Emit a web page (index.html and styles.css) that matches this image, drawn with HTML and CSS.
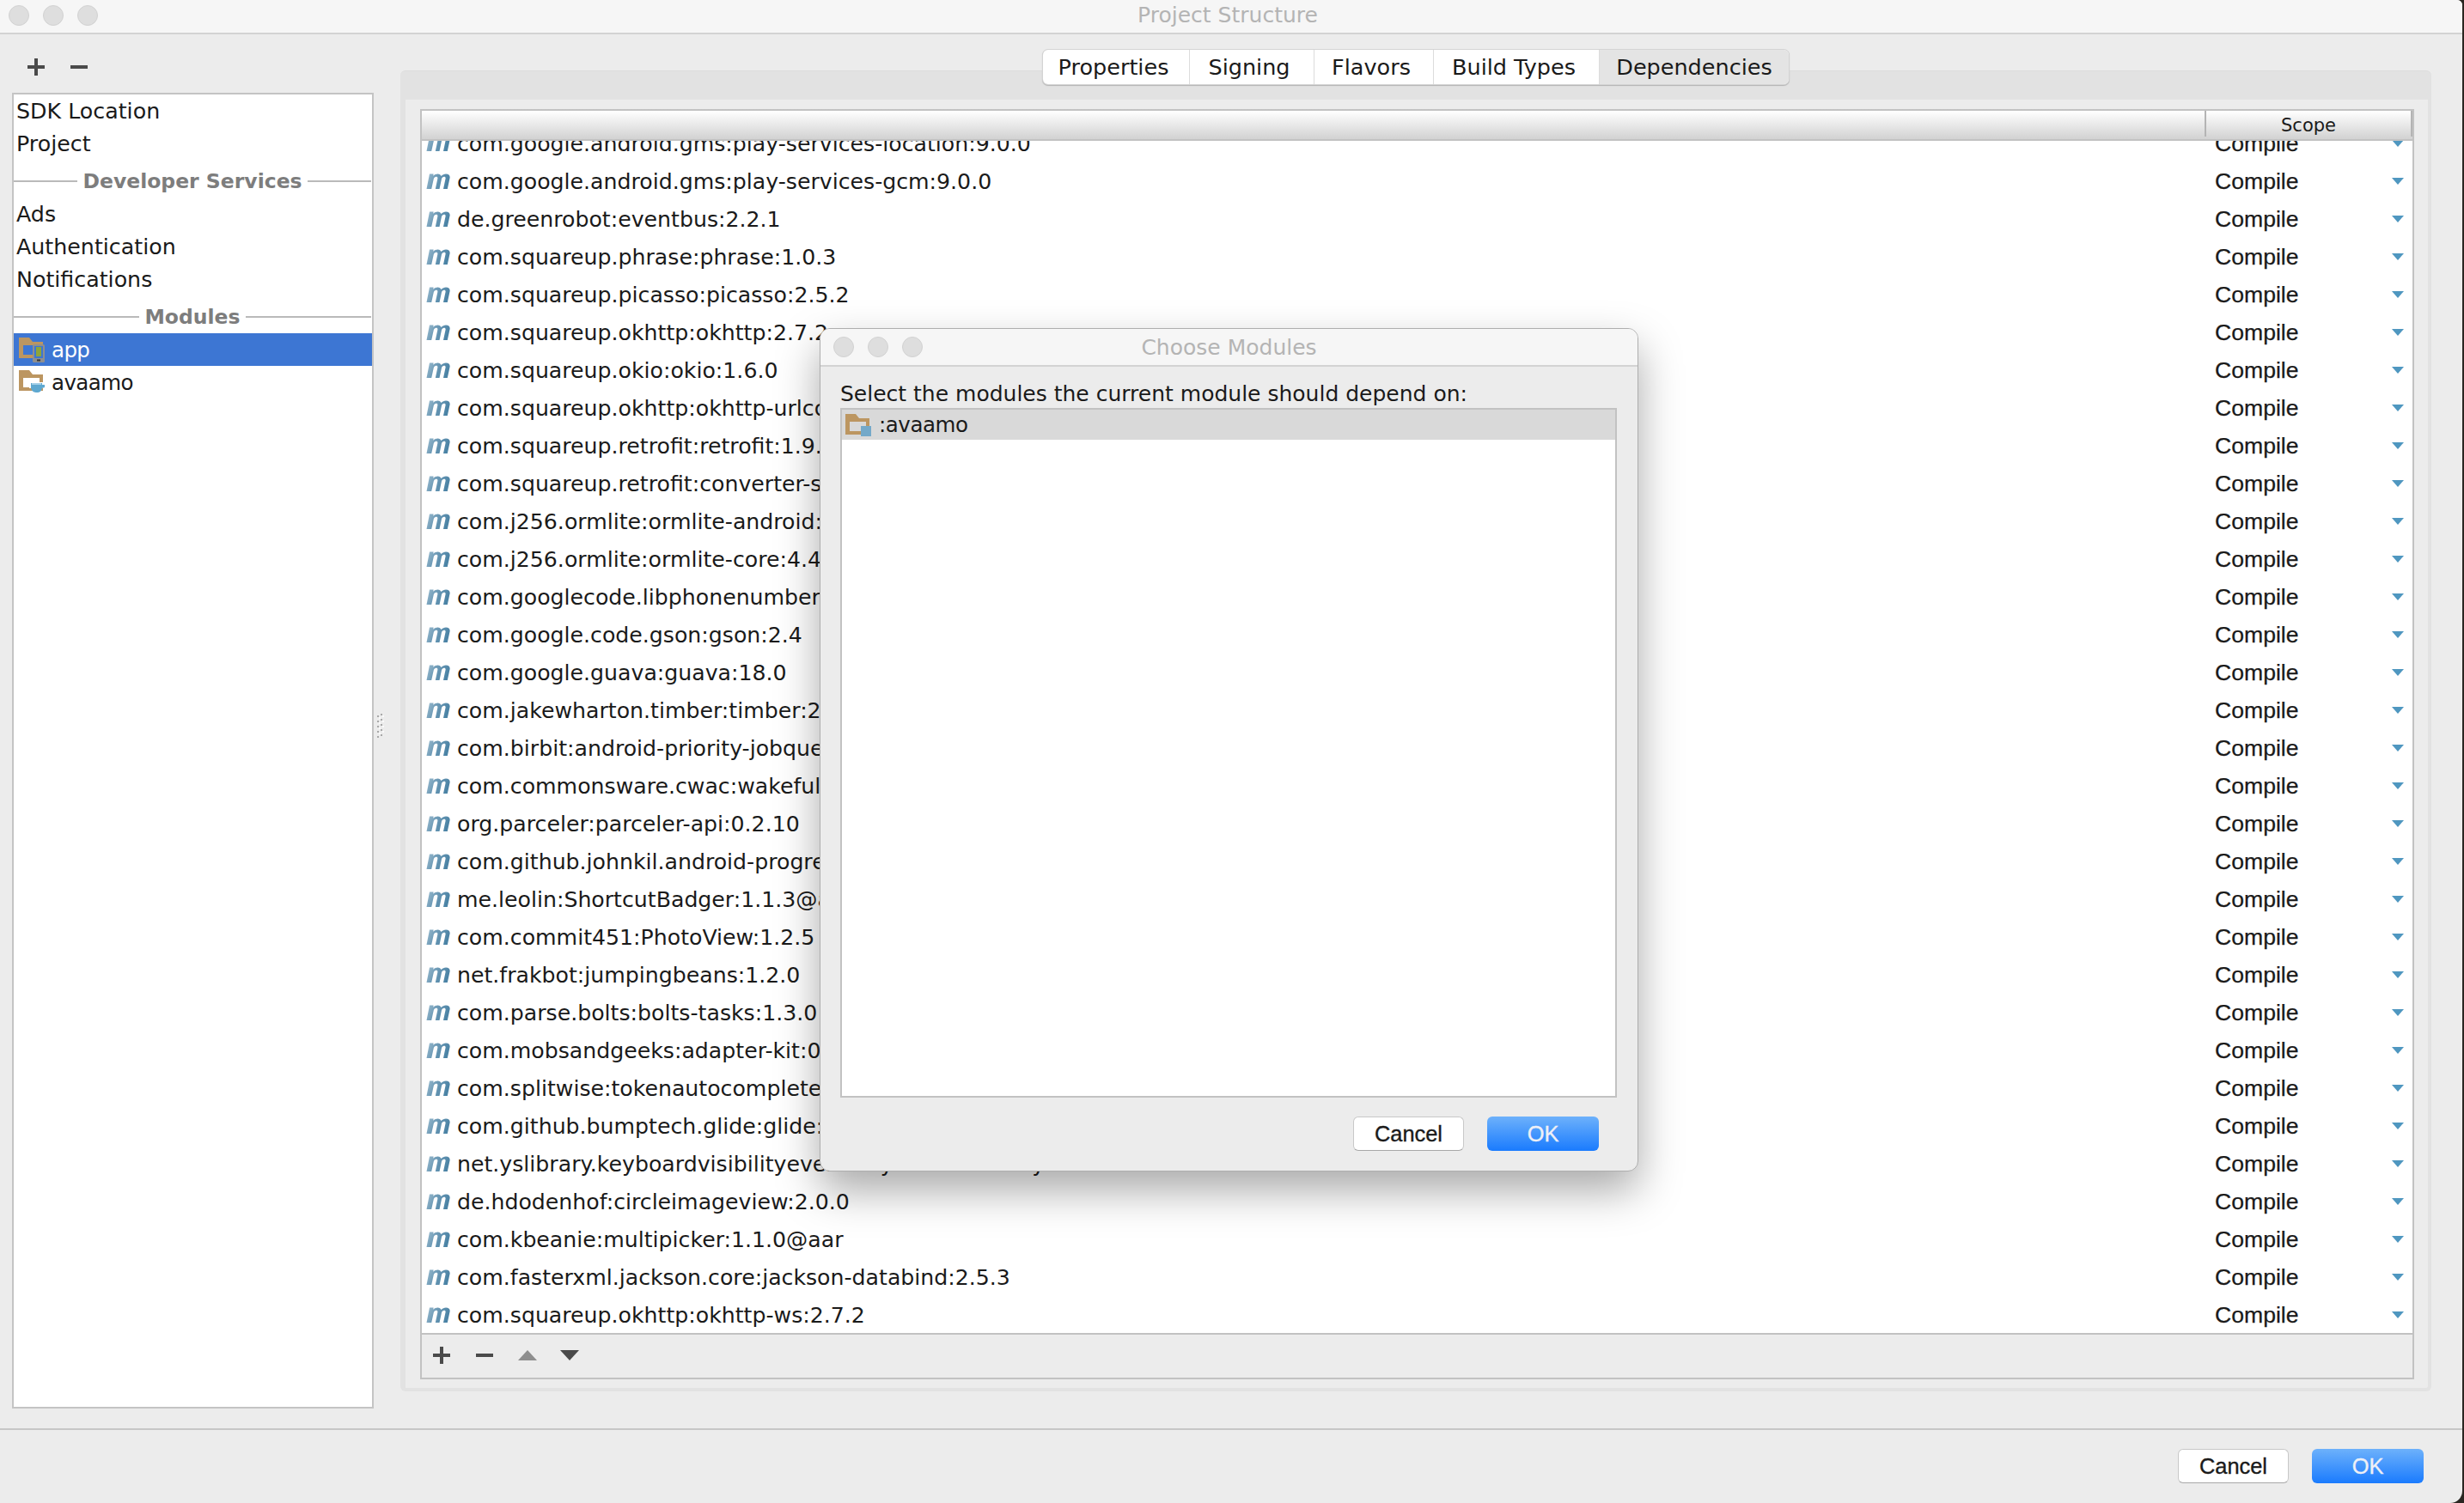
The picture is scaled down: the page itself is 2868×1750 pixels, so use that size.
FILE: index.html
```html
<!DOCTYPE html>
<html lang="en">
<head>
<meta charset="utf-8">
<title>Project Structure</title>
<link rel="stylesheet" href="styles.css">
</head>
<body>
<svg class="defs" width="0" height="0" aria-hidden="true">
  <defs>
    <linearGradient id="mgrad" x1="0" y1="0" x2="1" y2="0.3">
      <stop offset="0" stop-color="#9dbdd0"/>
      <stop offset="0.45" stop-color="#6d9ab6"/>
      <stop offset="1" stop-color="#4b83a5"/>
    </linearGradient>
    <symbol id="m" viewBox="0 0 28 18">
      <path fill="url(#mgrad)" d="M0.5 18 L4 .5 H8.6 L8.2 2.8 C9.8 1.2 11.6 .4 13.6 .4 C15.6 .4 16.9 1.3 17.4 3 C19 1.3 21 .4 23 .4 C26.5 .4 28.2 2.4 27.5 5.5 L24.8 18 H20 L22.5 6.2 C22.9 4.6 22.3 3.7 21 3.7 C19.6 3.7 18.4 4.7 18 6.2 L15.5 18 H10.8 L13.3 6.2 C13.6 4.6 13 3.7 11.8 3.7 C10.4 3.7 9.2 4.7 8.8 6.2 L6.2 18 Z"/>
    </symbol>
    <symbol id="plus" viewBox="0 0 20 20">
      <path fill="#4a4a4a" d="M8 0h4v8h8v4h-8v8H8v-8H0V8h8z"/>
    </symbol>
    <symbol id="minus" viewBox="0 0 20 20">
      <path fill="#4a4a4a" d="M0 8h20v4H0z"/>
    </symbol>
    <symbol id="folder" viewBox="0 0 28 24">
      <path fill="#bc9661" fill-rule="evenodd" d="M0 0H12L16 5H28V24H0ZM5 9V20H24V9Z"/>
    </symbol>
  </defs>
</svg>

<div class="window">
  <header class="titlebar main-titlebar">
    <div class="lights"><span class="light"></span><span class="light"></span><span class="light"></span></div>
    <div class="title">Project Structure</div>
  </header>

  <div class="main">
    <aside class="sidebar">
      <div class="side-tools">
        <svg class="tool"><use href="#plus"/></svg>
        <svg class="tool"><use href="#minus"/></svg>
      </div>
      <div class="side-list">
        <div class="side-row">SDK Location</div>
        <div class="side-row">Project</div>
        <div class="side-sep"><span class="sep-line"></span><span class="sep-text">Developer Services</span><span class="sep-line"></span></div>
        <div class="side-row">Ads</div>
        <div class="side-row">Authentication</div>
        <div class="side-row">Notifications</div>
        <div class="side-sep"><span class="sep-line"></span><span class="sep-text">Modules</span><span class="sep-line"></span></div>
        <div class="side-row module selected">
          <svg class="mod-icon" viewBox="0 0 30 29">
            <use href="#folder" x="0" y="0" width="28" height="24"/>
            <rect x="16" y="8" width="14" height="21" rx="1.5" fill="#8f8f8f"/>
            <rect x="18" y="10" width="10" height="14" fill="#3d76d3"/>
            <rect x="20" y="11" width="6" height="11" fill="#8ea53a"/>
            <rect x="21" y="25.5" width="4" height="2" fill="#333"/>
          </svg>
          <span>app</span>
        </div>
        <div class="side-row module">
          <svg class="mod-icon" viewBox="0 0 30 29">
            <use href="#folder" x="0" y="0" width="28" height="24"/>
            <rect x="12" y="14" width="18" height="7" fill="#fff"/>
            <path fill="#5ea8d0" d="M14 15h13v2h3v3l-3 1c-1 4-3 5-6 5s-6-1-7-5z"/>
            <path fill="#a6d0e8" d="M15 15h11v2H15z"/>
          </svg>
          <span>avaamo</span>
        </div>
      </div>
    </aside>

    <div class="grip">
      <svg width="8" height="30" viewBox="0 0 8 30">
        <path fill="#a8a8a8" d="M0 3h2v2H0zM0 9h2v2H0zM0 15h2v2H0zM0 21h2v2H0zM0 27h2v2H0zM4 1h2v2H4zM4 7h2v2H4zM4 13h2v2H4zM4 19h2v2H4zM4 25h2v2H4z"/>
        <path fill="#fafafa" d="M2 5h2v2H2zM2 11h2v2H2zM2 17h2v2H2zM2 23h2v2H2zM6 3h2v2H6zM6 9h2v2H6zM6 15h2v2H6zM6 21h2v2H6z"/>
      </svg>
    </div>

    <section class="panel">
      <div class="panel-head">
        <nav class="tabs">
          <div class="tab tab-properties">Properties</div>
          <div class="tab tab-signing">Signing</div>
          <div class="tab tab-flavors">Flavors</div>
          <div class="tab tab-build">Build Types</div>
          <div class="tab tab-deps active">Dependencies</div>
        </nav>
      </div>
      <div class="panel-body">
        <div class="table">
          <div class="thead">
            <div class="th-main"></div>
            <div class="th-scope">Scope</div>
          </div>
          <div class="tbody">
            <div class="rows">
              <div class="row"><svg class="m-icon"><use href="#m"/></svg><span class="dep">com.google.android.gms:play-services-location:9.0.0</span><span class="scope">Compile</span><span class="arrow"></span></div>
              <div class="row"><svg class="m-icon"><use href="#m"/></svg><span class="dep">com.google.android.gms:play-services-gcm:9.0.0</span><span class="scope">Compile</span><span class="arrow"></span></div>
              <div class="row"><svg class="m-icon"><use href="#m"/></svg><span class="dep">de.greenrobot:eventbus:2.2.1</span><span class="scope">Compile</span><span class="arrow"></span></div>
              <div class="row"><svg class="m-icon"><use href="#m"/></svg><span class="dep">com.squareup.phrase:phrase:1.0.3</span><span class="scope">Compile</span><span class="arrow"></span></div>
              <div class="row"><svg class="m-icon"><use href="#m"/></svg><span class="dep">com.squareup.picasso:picasso:2.5.2</span><span class="scope">Compile</span><span class="arrow"></span></div>
              <div class="row"><svg class="m-icon"><use href="#m"/></svg><span class="dep">com.squareup.okhttp:okhttp:2.7.2</span><span class="scope">Compile</span><span class="arrow"></span></div>
              <div class="row"><svg class="m-icon"><use href="#m"/></svg><span class="dep">com.squareup.okio:okio:1.6.0</span><span class="scope">Compile</span><span class="arrow"></span></div>
              <div class="row"><svg class="m-icon"><use href="#m"/></svg><span class="dep">com.squareup.okhttp:okhttp-urlconnection:2.7.2</span><span class="scope">Compile</span><span class="arrow"></span></div>
              <div class="row"><svg class="m-icon"><use href="#m"/></svg><span class="dep">com.squareup.retrofit:retrofit:1.9.0</span><span class="scope">Compile</span><span class="arrow"></span></div>
              <div class="row"><svg class="m-icon"><use href="#m"/></svg><span class="dep">com.squareup.retrofit:converter-simplexml:1.9.0</span><span class="scope">Compile</span><span class="arrow"></span></div>
              <div class="row"><svg class="m-icon"><use href="#m"/></svg><span class="dep">com.j256.ormlite:ormlite-android:4.48</span><span class="scope">Compile</span><span class="arrow"></span></div>
              <div class="row"><svg class="m-icon"><use href="#m"/></svg><span class="dep">com.j256.ormlite:ormlite-core:4.48</span><span class="scope">Compile</span><span class="arrow"></span></div>
              <div class="row"><svg class="m-icon"><use href="#m"/></svg><span class="dep">com.googlecode.libphonenumber:libphonenumber:7.2.2</span><span class="scope">Compile</span><span class="arrow"></span></div>
              <div class="row"><svg class="m-icon"><use href="#m"/></svg><span class="dep">com.google.code.gson:gson:2.4</span><span class="scope">Compile</span><span class="arrow"></span></div>
              <div class="row"><svg class="m-icon"><use href="#m"/></svg><span class="dep">com.google.guava:guava:18.0</span><span class="scope">Compile</span><span class="arrow"></span></div>
              <div class="row"><svg class="m-icon"><use href="#m"/></svg><span class="dep">com.jakewharton.timber:timber:2.7.1</span><span class="scope">Compile</span><span class="arrow"></span></div>
              <div class="row"><svg class="m-icon"><use href="#m"/></svg><span class="dep">com.birbit:android-priority-jobqueue:1.3.5</span><span class="scope">Compile</span><span class="arrow"></span></div>
              <div class="row"><svg class="m-icon"><use href="#m"/></svg><span class="dep">com.commonsware.cwac:wakeful:1.0.1</span><span class="scope">Compile</span><span class="arrow"></span></div>
              <div class="row"><svg class="m-icon"><use href="#m"/></svg><span class="dep">org.parceler:parceler-api:0.2.10</span><span class="scope">Compile</span><span class="arrow"></span></div>
              <div class="row"><svg class="m-icon"><use href="#m"/></svg><span class="dep">com.github.johnkil.android-progressfragment:1.4.0</span><span class="scope">Compile</span><span class="arrow"></span></div>
              <div class="row"><svg class="m-icon"><use href="#m"/></svg><span class="dep">me.leolin:ShortcutBadger:1.1.3@aar</span><span class="scope">Compile</span><span class="arrow"></span></div>
              <div class="row"><svg class="m-icon"><use href="#m"/></svg><span class="dep">com.commit451:PhotoView:1.2.5</span><span class="scope">Compile</span><span class="arrow"></span></div>
              <div class="row"><svg class="m-icon"><use href="#m"/></svg><span class="dep">net.frakbot:jumpingbeans:1.2.0</span><span class="scope">Compile</span><span class="arrow"></span></div>
              <div class="row"><svg class="m-icon"><use href="#m"/></svg><span class="dep">com.parse.bolts:bolts-tasks:1.3.0</span><span class="scope">Compile</span><span class="arrow"></span></div>
              <div class="row"><svg class="m-icon"><use href="#m"/></svg><span class="dep">com.mobsandgeeks:adapter-kit:0.5.3</span><span class="scope">Compile</span><span class="arrow"></span></div>
              <div class="row"><svg class="m-icon"><use href="#m"/></svg><span class="dep">com.splitwise:tokenautocomplete:2.0.7</span><span class="scope">Compile</span><span class="arrow"></span></div>
              <div class="row"><svg class="m-icon"><use href="#m"/></svg><span class="dep">com.github.bumptech.glide:glide:3.7.0</span><span class="scope">Compile</span><span class="arrow"></span></div>
              <div class="row"><svg class="m-icon"><use href="#m"/></svg><span class="dep">net.yslibrary.keyboardvisibilityevent:keyboardvisibilityevent:1.0.1</span><span class="scope">Compile</span><span class="arrow"></span></div>
              <div class="row"><svg class="m-icon"><use href="#m"/></svg><span class="dep">de.hdodenhof:circleimageview:2.0.0</span><span class="scope">Compile</span><span class="arrow"></span></div>
              <div class="row"><svg class="m-icon"><use href="#m"/></svg><span class="dep">com.kbeanie:multipicker:1.1.0@aar</span><span class="scope">Compile</span><span class="arrow"></span></div>
              <div class="row"><svg class="m-icon"><use href="#m"/></svg><span class="dep">com.fasterxml.jackson.core:jackson-databind:2.5.3</span><span class="scope">Compile</span><span class="arrow"></span></div>
              <div class="row"><svg class="m-icon"><use href="#m"/></svg><span class="dep">com.squareup.okhttp:okhttp-ws:2.7.2</span><span class="scope">Compile</span><span class="arrow"></span></div>
            </div>
          </div>
          <div class="tfoot">
            <svg class="tool"><use href="#plus"/></svg>
            <svg class="tool"><use href="#minus"/></svg>
            <span class="tri tri-up"></span>
            <span class="tri tri-down"></span>
          </div>
        </div>
      </div>
    </section>
  </div>

  <footer class="footer">
    <div class="btn btn-cancel">Cancel</div>
    <div class="btn btn-ok">OK</div>
  </footer>

  <div class="dialog">
    <header class="titlebar dialog-titlebar">
      <div class="lights"><span class="light"></span><span class="light"></span><span class="light"></span></div>
      <div class="title">Choose Modules</div>
    </header>
    <div class="dialog-body">
      <div class="dialog-label">Select the modules the current module should depend on:</div>
      <div class="dialog-list">
        <div class="dialog-row">
          <svg class="dlg-icon" viewBox="0 0 30 26">
            <use href="#folder" x="0" y="0" width="28" height="24"/>
            <rect x="18" y="14" width="12" height="12" fill="#74a9c9"/>
          </svg>
          <span>:avaamo</span>
        </div>
      </div>
      <div class="dialog-actions">
        <div class="btn btn-cancel">Cancel</div>
        <div class="btn btn-ok">OK</div>
      </div>
    </div>
  </div>
</div>
</body>
</html>
```

FILE: styles.css
```css
* { box-sizing: border-box; }

html, body {
  margin: 0;
  height: 100%;
  background: #2a2621;
}

body {
  font-family: "DejaVu Sans", sans-serif;
  font-size: 25px;
  color: #1a1a1a;
  overflow: hidden;
}

.defs { position: absolute; }

.window {
  position: relative;
  width: 2866px;
  height: 1750px;
  background: #ececec;
  border-radius: 0 6px 14px 0;
  overflow: hidden;
  display: flex;
  flex-direction: column;
}

/* title bars */
.titlebar {
  display: grid;
  grid-template-columns: 1fr auto 1fr;
  align-items: center;
  background: #f6f6f6;
  border-bottom: 2px solid #d3d3d3;
  flex: none;
}

.main-titlebar {
  height: 40px;
  padding: 0 18px 2px 10px;
}

.dialog-titlebar {
  height: 44px;
  padding: 2px 15px 0 15px;
  border-radius: 11px 11px 0 0;
}

.lights {
  display: flex;
  gap: 16px;
}

.dialog-titlebar .lights { margin-top: -2px; }

.light {
  width: 24px;
  height: 24px;
  border-radius: 50%;
  background: #dedede;
  border: 1px solid #d2d2d2;
}

.title {
  color: #b4b4b4;
  font-size: 25px;
  line-height: 30px;
}

/* main area */
.main {
  position: relative;
  flex: 1;
  min-height: 0;
  display: flex;
  padding-left: 14px;
}

.sidebar {
  width: 421px;
  flex: none;
  display: flex;
  flex-direction: column;
  padding-bottom: 23px;
}

.side-tools {
  height: 68px;
  flex: none;
  display: flex;
  align-items: center;
  gap: 30px;
  padding-left: 18px;
  padding-top: 8px;
}

.tool {
  width: 20px;
  height: 20px;
  flex: none;
}

.side-list {
  flex: 1;
  background: #fff;
  border: 2px solid #c4c4c4;
  overflow: hidden;
}

.side-row {
  height: 38px;
  display: flex;
  align-items: center;
  padding-left: 3px;
  font-size: 25.3px;
  white-space: nowrap;
}

.side-sep {
  height: 43px;
  padding-top: 5px;
  display: flex;
  align-items: center;
  gap: 6px;
  padding-right: 1px;
}

.side-row + .side-sep { height: 44px; }

.sep-line {
  flex: 1;
  height: 2px;
  background: #bababa;
}

.sep-text {
  color: #7d7d7d;
  font-weight: bold;
  font-size: 23.5px;
  line-height: 30px;
}

.module {
  padding-left: 6px;
  gap: 8px;
  font-size: 24.5px;
  letter-spacing: -0.6px;
}

.module.selected {
  background: #3d76d3;
  color: #fff;
}

.mod-icon {
  width: 30px;
  height: 29px;
  flex: none;
}

.grip {
  position: absolute;
  left: 439px;
  top: 790px;
  line-height: 0;
}

/* right panel */
.panel {
  width: 2364px;
  margin: 42px 0 43px 31px;
  flex: none;
  display: flex;
  flex-direction: column;
  border-radius: 6px 6px 0 0;
}

.panel-head {
  height: 34px;
  flex: none;
  background: #e2e2e2;
  border-top: 1px solid #dcdcdc;
  border-radius: 6px 6px 0 0;
  display: flex;
  justify-content: center;
  align-items: flex-start;
}

.tabs {
  display: flex;
  height: 40px;
  margin-top: -25px;
  background: #fff;
  border-radius: 6px;
  box-shadow: 0 0 0 1px #d4d4d4, 0 1px 1px 1px #b4b4b4;
  overflow: hidden;
}

.tab {
  display: flex;
  align-items: center;
  justify-content: center;
  border-left: 1px solid #dcdcdc;
  padding-right: 6px;
  font-size: 25.5px;
  white-space: nowrap;
}

.tab:first-child { border-left: 0; }
.tab-properties { width: 170px; }
.tab-signing { width: 145px; }
.tab-flavors { width: 139px; }
.tab-build { width: 193px; }
.tab-deps { width: 221px; padding-right: 0; }
.tab.active { background: #e4e4e4; }

.panel-body {
  flex: 1;
  min-height: 0;
  background: #ececec;
  border: solid #e2e2e2;
  border-width: 0 4px 4px 6px;
  border-radius: 0 0 6px 6px;
  padding: 11px 16px 10px 17px;
  display: flex;
}

.table {
  flex: 1;
  min-width: 0;
  display: flex;
  flex-direction: column;
  border: 2px solid #c2c2c2;
}

.thead {
  height: 35px;
  flex: none;
  display: flex;
  background: linear-gradient(#ffffff, #d2d2d2);
  border-bottom: 2px solid #c2c2c2;
  padding-bottom: 3px;
}

.th-main { flex: 1; }

.th-scope {
  width: 242px;
  flex: none;
  border-left: 2px solid #b4b4b4;
  border-right: 2px solid #b4b4b4;
  text-align: center;
  font-size: 21px;
  line-height: 34px;
}

.tbody {
  flex: 1;
  min-height: 0;
  background: #fff;
  overflow: hidden;
}

.rows { margin-top: -19px; }

.row {
  height: 44px;
  display: flex;
  align-items: center;
  padding-left: 5px;
  position: relative;
}

.m-icon {
  width: 28px;
  height: 18px;
  flex: none;
  margin-right: 8px;
}

.dep {
  flex: 1;
  min-width: 0;
  white-space: nowrap;
  font-size: 25.2px;
}

.scope {
  width: 206px;
  flex: none;
  font-family: "Liberation Sans", sans-serif;
  font-size: 26.6px;
  -webkit-text-stroke: 0.25px #1a1a1a;
}

.arrow {
  width: 0;
  height: 0;
  flex: none;
  margin-right: 10px;
  border-left: 7px solid transparent;
  border-right: 7px solid transparent;
  border-top: 8px solid #4f97c0;
}

.tfoot {
  height: 52px;
  flex: none;
  display: flex;
  align-items: center;
  gap: 30px;
  padding: 0 0 2px 13px;
  background: #ececec;
  border-top: 2px solid #c2c2c2;
}

.tri {
  width: 0;
  height: 0;
  flex: none;
  border-left: 11px solid transparent;
  border-right: 11px solid transparent;
}

.tfoot .tri { margin-right: -2px; margin-left: -1px; }
.tri-up { border-bottom: 12px solid #8e8e8e; }
.tri-down { border-top: 12px solid #4a4a4a; }

/* footer */
.footer {
  height: 87px;
  flex: none;
  display: flex;
  justify-content: flex-end;
  gap: 27px;
  padding: 22px 45px 0 0;
  border-top: 2px solid #c6c6c6;
}

.btn {
  width: 130px;
  height: 40px;
  display: flex;
  align-items: center;
  justify-content: center;
  border-radius: 6px;
  font-family: "Liberation Sans", sans-serif;
  font-size: 25.4px;
  -webkit-text-stroke: 0.35px currentColor;
}

.btn-cancel {
  width: 129px;
  background: #fff;
  border: 1px solid #c8c8c8;
  border-bottom-color: #a8a8a8;
  color: #1a1a1a;
}

.btn-ok {
  background: linear-gradient(#6db1fb, #1a7bfe);
  color: #eef0f6;
}

/* dialog */
.dialog {
  position: absolute;
  left: 954px;
  top: 382px;
  width: 953px;
  height: 982px;
  display: flex;
  flex-direction: column;
  background: #ececec;
  border: 1px solid #aeaeae;
  border-radius: 12px;
  box-shadow: 0 22px 50px rgba(0, 0, 0, 0.34);
}

.dialog-body {
  flex: 1;
  min-height: 0;
  display: flex;
  flex-direction: column;
  padding: 17px 24px 23px 23px;
}

.dialog-label {
  height: 31px;
  flex: none;
  line-height: 30px;
  font-size: 25px;
  white-space: nowrap;
}

.dialog-list {
  flex: 1;
  min-height: 0;
  background: #fff;
  border: 2px solid #c2c2c2;
}

.dialog-row {
  height: 35px;
  display: flex;
  align-items: center;
  gap: 9px;
  padding-left: 4px;
  background: #d9d9d9;
  font-size: 24.5px;
  letter-spacing: -0.45px;
}

.dlg-icon {
  width: 30px;
  height: 26px;
  flex: none;
}

.dialog-actions {
  flex: none;
  display: flex;
  justify-content: flex-end;
  gap: 27px;
  margin-top: 22px;
  padding-right: 21px;
}
```
